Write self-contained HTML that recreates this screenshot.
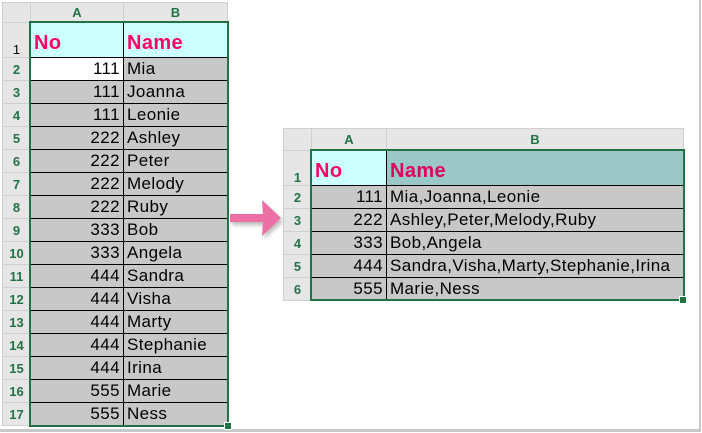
<!DOCTYPE html><html><head><style>
body{margin:0;width:702px;height:433px;background:#fff;position:relative;overflow:hidden;font-family:"Liberation Sans",Arial,sans-serif}
.frame{position:absolute;left:0;top:0;width:699px;height:429px;border-right:2px solid #c8c8c8;border-bottom:3px solid #c8c8c8}
table{position:absolute;border-collapse:collapse;table-layout:fixed}
td{padding:0 3px;font-size:17px;letter-spacing:0.4px;color:#000;white-space:nowrap;overflow:hidden;border:1px solid #000;background:#c8c8c8}
td.h{background:#e6e6e6;border:1px solid #d0d0d0;color:#217346;font-weight:bold;font-size:13px;letter-spacing:0;text-align:center}
td.r{background:#e6e6e6;border:1px solid #d0d0d0;color:#217346;font-weight:bold;font-size:13px;letter-spacing:0;text-align:center;padding:0}
td.n{text-align:right}
td.t{color:#ff0066;font-weight:bold;font-size:20px;vertical-align:bottom;padding-bottom:2px}
td.c{background:#ccffff}td.w{background:#fff}
.sel{position:absolute;border:2px solid #217346;box-sizing:border-box}
.hnd{position:absolute;width:6px;height:6px;background:#217346;border:1px solid #fff}
</style></head><body>
<div class="frame"></div>
<table style="left:2px;top:2px;width:226px">
<colgroup><col style="width:28px"><col style="width:93px"><col style="width:104px"></colgroup>
<tr style="height:20px"><td class="r"></td><td class="h">A</td><td class="h">B</td></tr>
<tr style="height:35px"><td class="r" style="vertical-align:bottom;font-weight:normal;color:#000">1</td><td class="t c">No</td><td class="t c">Name</td></tr>
<tr style="height:23px"><td class="r">2</td><td class="n w">111</td><td>Mia</td></tr>
<tr style="height:23px"><td class="r">3</td><td class="n">111</td><td>Joanna</td></tr>
<tr style="height:23px"><td class="r">4</td><td class="n">111</td><td>Leonie</td></tr>
<tr style="height:23px"><td class="r">5</td><td class="n">222</td><td>Ashley</td></tr>
<tr style="height:23px"><td class="r">6</td><td class="n">222</td><td>Peter</td></tr>
<tr style="height:23px"><td class="r">7</td><td class="n">222</td><td>Melody</td></tr>
<tr style="height:23px"><td class="r">8</td><td class="n">222</td><td>Ruby</td></tr>
<tr style="height:23px"><td class="r">9</td><td class="n">333</td><td>Bob</td></tr>
<tr style="height:23px"><td class="r">10</td><td class="n">333</td><td>Angela</td></tr>
<tr style="height:23px"><td class="r">11</td><td class="n">444</td><td>Sandra</td></tr>
<tr style="height:23px"><td class="r">12</td><td class="n">444</td><td>Visha</td></tr>
<tr style="height:23px"><td class="r">13</td><td class="n">444</td><td>Marty</td></tr>
<tr style="height:23px"><td class="r">14</td><td class="n">444</td><td>Stephanie</td></tr>
<tr style="height:23px"><td class="r">15</td><td class="n">444</td><td>Irina</td></tr>
<tr style="height:23px"><td class="r">16</td><td class="n">555</td><td>Marie</td></tr>
<tr style="height:23px"><td class="r">17</td><td class="n">555</td><td>Ness</td></tr>
</table>
<div class="sel" style="left:29px;top:21px;width:200px;height:406px"></div>
<div class="hnd" style="left:224px;top:422px"></div>
<table style="left:283px;top:128px;width:401px">
<colgroup><col style="width:28px"><col style="width:75px"><col style="width:297px"></colgroup>
<tr style="height:22px"><td class="r"></td><td class="h">A</td><td class="h">B</td></tr>
<tr style="height:35px"><td class="r" style="vertical-align:bottom">1</td><td class="t c">No</td><td class="t" style="background:#9cc7c7;color:#e0005a">Name</td></tr>
<tr style="height:23px"><td class="r">2</td><td class="n">111</td><td>Mia,Joanna,Leonie</td></tr>
<tr style="height:23px"><td class="r">3</td><td class="n">222</td><td>Ashley,Peter,Melody,Ruby</td></tr>
<tr style="height:23px"><td class="r">4</td><td class="n">333</td><td>Bob,Angela</td></tr>
<tr style="height:23px"><td class="r">5</td><td class="n">444</td><td>Sandra,Visha,Marty,Stephanie,Irina</td></tr>
<tr style="height:23px"><td class="r">6</td><td class="n">555</td><td>Marie,Ness</td></tr>
</table>
<div class="sel" style="left:310px;top:149px;width:375px;height:152px"></div>
<div class="hnd" style="left:679px;top:296px"></div>
<svg style="position:absolute;left:225px;top:195px" width="65" height="50"><defs><filter id="s"><feDropShadow dx="2" dy="3" stdDeviation="2" flood-color="#888" flood-opacity=".6"/></filter></defs>
<polygon filter="url(#s)" fill="#ec6fa4" points="5,19 38,19 37,5 56,23 37,41 38,27 5,27"/></svg>
</body></html>
